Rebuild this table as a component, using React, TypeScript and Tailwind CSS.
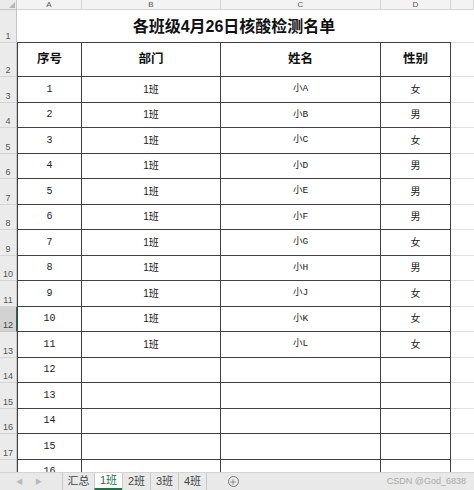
import { Plus } from "lucide-react";

const cjk = "font-['Liberation_Sans','Noto_Sans_CJK_SC',sans-serif]";
const song = "font-['Liberation_Mono','Noto_Sans_CJK_SC',monospace]";

const students = [
  { name: "小A", sex: "女" },
  { name: "小B", sex: "男" },
  { name: "小C", sex: "女" },
  { name: "小D", sex: "男" },
  { name: "小E", sex: "男" },
  { name: "小F", sex: "男" },
  { name: "小G", sex: "女" },
  { name: "小H", sex: "男" },
  { name: "小J", sex: "女" },
  { name: "小K", sex: "女" },
  { name: "小L", sex: "女" },
];

const tabs = ["汇总", "1班", "2班", "3班", "4班"];

function RowHead({ n, h, selected }: { n: number; h: string; selected?: boolean }) {
  return (
    <div
      className={`flex w-[17px] shrink-0 items-end justify-center border-b border-r pb-[1px] text-[9px] leading-none ${h} ${
        selected
          ? "border-b-[#c6c6c6] border-r-[#217346] bg-[#d2d2d2] text-[#444]"
          : "border-b-[#d4d4d4] border-r-[#c6c6c6] bg-[#ebebeb] text-[#555]"
      }`}
    >
      {n}
    </div>
  );
}

export default function App() {
  const rows = Array.from({ length: 16 }, (_, i) => i + 1);

  return (
    <div className={`flex h-[490px] w-[474px] flex-col overflow-hidden bg-white ${cjk}`}>
      <div className="h-[472px] overflow-hidden">
        {/* column letters */}
        <div className="flex h-[10px] text-[8px] leading-none text-[#555]">
          <div className="relative w-[17px] shrink-0 border-b border-r border-[#c6c6c6] bg-[#ebebeb]">
            <div className="absolute bottom-[1px] right-[1px] h-0 w-0 border-b-[6px] border-l-[6px] border-b-[#b5b5b5] border-l-transparent" />
          </div>
          {[
            ["A", "w-[65px]"],
            ["B", "w-[139px]"],
            ["C", "w-[160px]"],
            ["D", "w-[70px]"],
            ["", "flex-1"],
          ].map(([l, w]) => (
            <div
              key={l + w}
              className={`flex items-center justify-center border-b border-r border-[#d4d4d4] bg-[#f3f3f3] ${w}`}
            >
              {l}
            </div>
          ))}
        </div>

        {/* row 1: title */}
        <div className="flex">
          <RowHead n={1} h="h-[33px]" />
          <div className="flex h-[33px] w-[434px] items-center justify-center border-b border-[#404040] pt-[2px] text-[16px] font-bold text-[#111]">
            各班级4月26日核酸检测名单
          </div>
          <div className="h-[33px] flex-1 border-b border-[#e1e1e1]" />
        </div>

        {/* row 2: header */}
        <div className="flex">
          <RowHead n={2} h="h-[34px]" />
          {[
            ["序号", "w-[65px] border-l"],
            ["部门", "w-[139px]"],
            ["姓名", "w-[160px]"],
            ["性别", "w-[70px]"],
          ].map(([t, w]) => (
            <div
              key={t}
              className={`flex h-[34px] items-center justify-center border-b border-r border-[#404040] text-[12.5px] font-bold text-[#111] ${w}`}
            >
              {t}
            </div>
          ))}
          <div className="h-[34px] flex-1 border-b border-[#e1e1e1]" />
        </div>

        {/* data rows */}
        {rows.map((n) => {
          const s = students[n - 1];
          const cell = "flex h-[25.5px] items-center justify-center border-b border-r border-[#404040] text-[#222]";
          return (
            <div key={n} className="flex">
              <RowHead n={n + 2} h="h-[25.5px]" selected={n + 2 === 12} />
              <div className={`${cell} ${song} w-[65px] border-l text-[10px]`}>{n}</div>
              <div className={`${cell} w-[139px] text-[10px]`}>{s ? "1班" : ""}</div>
              <div className={`${cell} ${song} w-[160px] text-[9.5px]`}>{s ? s.name : ""}</div>
              <div className={`${cell} w-[70px] text-[10px]`}>{s ? s.sex : ""}</div>
              <div className="h-[25.5px] flex-1 border-b border-[#e1e1e1]" />
            </div>
          );
        })}
      </div>

      {/* sheet tabs */}
      <div className="flex h-[18px] items-stretch border-t border-[#d4d4d4] bg-[#e9e9e9] text-[11px] text-[#444]">
        <div className="flex w-[62px] items-center gap-[12px] pl-[16px] text-[7px] leading-none text-[#b8b8b8]">
          <span>◀</span>
          <span>▶</span>
        </div>
        {tabs.map((t, i) => (
          <div
            key={t}
            className={`flex items-center justify-center border-l border-[#c9c9c9] ${
              i === 0 ? "w-[32px]" : "w-[28px]"
            } ${i === 1 ? "border-b-2 border-b-[#217346] bg-white text-[#217346]" : ""}`}
          >
            {t}
          </div>
        ))}
        <div className="border-l border-[#c9c9c9]" />
        <div className="flex w-[52px] items-center justify-center">
          <div className="flex h-[11px] w-[11px] items-center justify-center rounded-full border border-[#777] text-[#666]">
            <Plus size={8} strokeWidth={2} />
          </div>
        </div>
        <div className="flex flex-1 items-center justify-end pr-[8px] text-[9px] text-[#a8a8a8]">
          CSDN @God_6838
        </div>
      </div>
    </div>
  );
}
